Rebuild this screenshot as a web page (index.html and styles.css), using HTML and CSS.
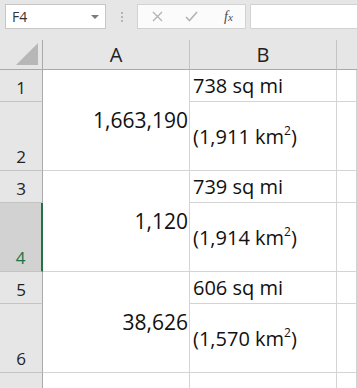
FILE: index.html
```html
<!DOCTYPE html>
<html>
<head>
<meta charset="utf-8">
<link rel="stylesheet" href="styles.css">
</head>
<body>
<div class="toolbar">
  <div class="namebox">
    <span class="name">F4</span>
    <span class="caret"></span>
  </div>
  <div class="grip"><i></i><i></i><i></i></div>
  <div class="fxbox">
    <svg class="ic-x" width="11" height="11" viewBox="0 0 11 11"><path d="M1 1L10 10M10 1L1 10" stroke="#b4b4b4" stroke-width="1.4" fill="none"/></svg>
    <svg class="ic-check" width="13" height="11" viewBox="0 0 13 11"><path d="M1 6L4.5 9.5L12 1" stroke="#b4b4b4" stroke-width="1.6" fill="none"/></svg>
    <span class="fx">f<span class="fxx">x</span></span>
  </div>
  <div class="formula"></div>
</div>
<div class="sheet">
  <div class="corner"><svg width="23" height="23" viewBox="0 0 23 23"><polygon points="22,0 22,22 0,22" fill="#b7b7b7"/></svg></div>
  <div class="colhead">A</div>
  <div class="colhead">B</div>
  <div class="colhead last"></div>

  <div class="rowhead">1</div>
  <div class="cell num span2">1,663,190</div>
  <div class="cell txt">738 sq mi</div>
  <div class="cell"></div>

  <div class="rowhead">2</div>
  <div class="cell txt"><span>(1,911 km<sup class="sup">2</sup>)</span></div>
  <div class="cell"></div>

  <div class="rowhead">3</div>
  <div class="cell num span2">1,120</div>
  <div class="cell txt">739 sq mi</div>
  <div class="cell"></div>

  <div class="rowhead sel">4</div>
  <div class="cell txt"><span>(1,914 km<sup class="sup">2</sup>)</span></div>
  <div class="cell"></div>

  <div class="rowhead">5</div>
  <div class="cell num span2">38,626</div>
  <div class="cell txt">606 sq mi</div>
  <div class="cell"></div>

  <div class="rowhead">6</div>
  <div class="cell txt"><span>(1,570 km<sup class="sup">2</sup>)</span></div>
  <div class="cell"></div>

  <div class="rowhead last-row"></div>
  <div class="cell last-row"></div>
  <div class="cell last-row"></div>
  <div class="cell last-row"></div>
</div>
</body>
</html>
```
FILE: styles.css
```css
html, body {
  margin: 0;
  padding: 0;
  background: #e6e6e6;
  overflow: hidden;
  height: 388px;
  font-family: "Open Sans", "DejaVu Sans", sans-serif;
}
.toolbar {
  height: 40px;
  box-sizing: border-box;
  padding-top: 4px;
  display: flex;
  align-items: flex-start;
}
.namebox {
  margin-left: 5px;
  width: 101px;
  height: 25px;
  box-sizing: border-box;
  background: #fff;
  border: 1px solid #c6c6c6;
  display: flex;
  align-items: center;
  padding-left: 6px;
  padding-right: 6px;
}
.name {
  font-size: 14px;
  color: #333;
  flex: 1;
}
.caret {
  width: 0;
  height: 0;
  border-left: 4px solid transparent;
  border-right: 4px solid transparent;
  border-top: 4px solid #7a7a7a;
  margin-top: 1px;
}
.grip {
  width: 31px;
  height: 25px;
  display: flex;
  flex-direction: column;
  align-items: center;
  justify-content: center;
  gap: 2px;
}
.grip i {
  display: block;
  width: 2px;
  height: 2px;
  background: #b5b5b5;
}
.fxbox {
  width: 109px;
  height: 25px;
  box-sizing: border-box;
  background: #fbfbfb;
  border: 1px solid #d2d2d2;
  display: flex;
  align-items: center;
  padding-left: 14px;
}
.ic-x { margin-right: 22px; }
.ic-check { margin-right: 26px; }
.fx {
  font-family: "Liberation Serif", "DejaVu Serif", serif;
  font-style: italic;
  font-size: 14px;
  color: #4a4a4a;
}
.fxx { font-size: 11px; }
.formula {
  margin-left: 4px;
  flex: 1;
  height: 25px;
  box-sizing: border-box;
  background: #fff;
  border: 1px solid #d2d2d2;
  border-right: none;
}
.sheet {
  display: grid;
  grid-template-columns: 43px 147px 147px 1fr;
  grid-template-rows: 30px 32px 69px 32px 69px 32px 69px 15px;
  background: #fff;
}
.sheet > div {
  box-sizing: border-box;
}
.corner {
  background: #e6e6e6;
  border-right: 1px solid #a9a9a9;
  border-bottom: 1px solid #a9a9a9;
  display: flex;
  align-items: flex-end;
  justify-content: flex-end;
  padding: 0 3px 3px 0;
}
.corner svg { display: block; }
.colhead {
  background: #e6e6e6;
  border-right: 1px solid #c3c3c3;
  border-bottom: 1px solid #a9a9a9;
  display: flex;
  align-items: center;
  justify-content: center;
  font-size: 20px;
  color: #222;
  line-height: 29px;
}
.colhead.last { border-right: none; }
.rowhead {
  background: #e6e6e6;
  border-right: 1px solid #a9a9a9;
  border-bottom: 1px solid #c3c3c3;
  display: flex;
  align-items: flex-end;
  justify-content: center;
  font-size: 17px;
  line-height: 20px;
  padding-bottom: 3px;
  color: #222;
}
.rowhead.sel {
  background: #d2d2d2;
  color: #217346;
  border-right: 2px solid #217346;
}
.cell {
  border-right: 1px solid #d4d4d4;
  border-bottom: 1px solid #d4d4d4;
  display: flex;
  align-items: center;
  font-size: 20px;
  color: #111;
  white-space: nowrap;
}
.last-row {
  border-bottom: none;
  padding-bottom: 0;
}
.span2 { grid-row: span 2; }
.num {
  justify-content: flex-end;
  padding-right: 1px;
  font-size: 21px;
}
.txt {
  padding-left: 3px;
}
.sup {
  font-size: 12px;
  vertical-align: 9px;
  line-height: 0;
}
```
